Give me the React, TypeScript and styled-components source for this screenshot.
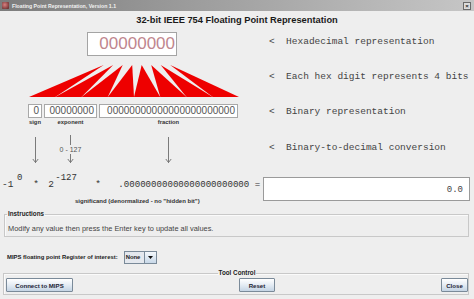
import styled, { createGlobalStyle } from "styled-components";

const GlobalStyle = createGlobalStyle`
  html, body {
    margin: 0;
    padding: 0;
    background: #eeeeee;
  }
  body {
    font-family: "Liberation Sans", Arial, sans-serif;
  }
`;

const Window = styled.div`
  width: 474px;
  height: 299px;
  overflow: hidden;
  background: #eeeeee;
  display: flex;
  flex-direction: column;
`;

const TitleBar = styled.div`
  height: 11px;
  flex: none;
  display: flex;
  align-items: center;
  gap: 3px;
  padding: 0 3px 0 2px;
  background: linear-gradient(to right, #7c7c7c, #9c9c9c 40%, #c6c6c6);
`;
const TitleIcon = styled.div`
  width: 7px;
  height: 7px;
  border-radius: 1px;
  background: radial-gradient(circle at 40% 40%, #d88080, #5a2222);
`;
const TitleText = styled.span`
  flex: 1;
  font-size: 5.2px;
  font-weight: bold;
  color: #f2f2f2;
`;
const CloseBox = styled.div`
  width: 6px;
  height: 6px;
  border: 1px solid #6a6a6a;
  background: #dcdcdc;
  font-size: 6px;
  line-height: 6px;
  text-align: center;
  font-weight: bold;
  color: #222;
`;

const Heading = styled.h1`
  margin: 2px 0 0;
  font-size: 9.3px;
  line-height: 14px;
  font-weight: bold;
  text-align: center;
  color: #1a1a1a;
`;

const Row = styled.div<{ $top: number; $height: number }>`
  display: flex;
  margin-top: ${(p) => p.$top}px;
  height: ${(p) => p.$height}px;
`;
const Left = styled.div`
  width: 269px;
  flex: none;
  display: flex;
`;
const Note = styled.div<{ $offset: number }>`
  margin-top: ${(p) => p.$offset}px;
  font-family: "Liberation Mono", "Courier New", monospace;
  font-size: 9.5px;
  line-height: 12px;
  color: #444;
  white-space: pre;
`;

const HexField = styled.div`
  margin-left: 87px;
  width: 87px;
  height: 22px;
  padding-right: 1px;
  border: 1px solid #a4a4a4;
  background: #fff;
  font-size: 17px;
  line-height: 22px;
  text-align: right;
  color: #c0868e;
`;

const BitColumn = styled.div<{ $width: number; $gap: number }>`
  width: ${(p) => p.$width}px;
  margin-left: ${(p) => p.$gap}px;
  display: flex;
  flex-direction: column;
  align-items: center;
`;
const BitBox = styled.div`
  align-self: stretch;
  height: 12px;
  padding-right: 2px;
  border: 1px solid #a8a8a8;
  background: #fff;
  font-size: 10px;
  line-height: 12px;
  text-align: right;
  color: #555;
`;
const BitLabel = styled.div`
  font-size: 5.8px;
  font-weight: bold;
  line-height: 8px;
  color: #333;
`;
const RangeLabel = styled.div`
  font-size: 7px;
  line-height: 9px;
  color: #555;
`;

const Expr = styled.div`
  display: flex;
  align-items: baseline;
  height: 16px;
  font-family: "Liberation Mono", "Courier New", monospace;
  font-size: 9.5px;
  line-height: 16px;
  color: #333;
  white-space: pre;
`;
const Piece = styled.span<{ $gap: number; $size?: number }>`
  margin-left: ${(p) => p.$gap}px;
  font-size: ${(p) => p.$size ?? 9.5}px;
`;
const Sup = styled.span<{ $gap: number }>`
  margin-left: ${(p) => p.$gap}px;
  font-size: 9px;
  transform: translateY(-7px);
`;
const FormulaLeft = styled.div`
  display: flex;
  flex-direction: column;
`;
const Caption = styled.div`
  margin: 4px 0 0 75px;
  font-size: 6px;
  font-weight: bold;
  line-height: 8px;
  color: #333;
`;
const ResultBox = styled.div`
  flex: 1;
  height: 22px;
  margin: 0 4px 0 3px;
  padding-right: 6px;
  border: 1px solid #9a9a9a;
  background: #fff;
  font-family: "Liberation Mono", "Courier New", monospace;
  font-size: 9px;
  line-height: 24px;
  text-align: right;
  color: #444;
`;

const Group = styled.fieldset<{ $top: number; $left: number }>`
  margin: ${(p) => p.$top}px 5px 0 ${(p) => p.$left}px;
  padding: 0 0 2px 2px;
  border: 1px solid #c8c8c8;
  box-shadow: inset 1px 1px 0 #fafafa;
  min-width: 0;
`;
const Legend = styled.legend<{ $center?: boolean }>`
  padding: 0 1px;
  margin: ${(p) => (p.$center ? "0 auto" : "0")};
  font-size: 6.3px;
  font-weight: bold;
  line-height: 8px;
  color: #222;
`;
const GroupText = styled.div`
  margin-top: 6px;
  padding-left: 1px;
  font-size: 7.4px;
  line-height: 10px;
  color: #444;
`;

const RegisterRow = styled.div`
  display: flex;
  align-items: center;
  height: 12px;
  margin: 14px 0 0 7px;
  gap: 6px;
`;
const RegisterLabel = styled.span`
  font-size: 5.9px;
  font-weight: bold;
  color: #222;
`;
const Combo = styled.div`
  display: flex;
  height: 11px;
  border: 1px solid #7a8a99;
`;
const ComboValue = styled.div`
  width: 18px;
  padding-left: 1px;
  background: #e4e8ee;
  font-size: 5.9px;
  font-weight: bold;
  line-height: 11px;
  color: #222;
`;
const ComboArrow = styled.div`
  width: 11px;
  border-left: 1px solid #7a8a99;
  background: linear-gradient(#f4f8fc, #c8d8e8);
  display: flex;
  align-items: center;
  justify-content: center;
`;

const ButtonRow = styled.div`
  display: flex;
  justify-content: space-between;
  margin-top: 1px;
`;
const Button = styled.button<{ $width: number }>`
  width: ${(p) => p.$width}px;
  height: 14px;
  padding: 0;
  border: 1px solid #7a8a99;
  border-radius: 1px;
  background: linear-gradient(#ffffff, #e4ecf4 50%, #c4d4e4);
  font-family: "Liberation Sans", Arial, sans-serif;
  font-size: 6.1px;
  font-weight: bold;
  color: #223;
`;

const ArrowCol = styled.div<{ $width: number; $gap: number; $pad: number }>`
  width: ${(p) => p.$width}px;
  margin-left: ${(p) => p.$gap}px;
  padding-top: ${(p) => p.$pad}px;
  display: flex;
  flex-direction: column;
  align-items: center;
`;

function DownArrow({ height, head = true }: { height: number; head?: boolean }) {
  return (
    <svg width="7" height={height} viewBox={`0 0 7 ${height}`}>
      <line x1="3.5" y1="0" x2="3.5" y2={height} stroke="#7a7a7a" strokeWidth="1" />
      {head && (
        <polyline
          points={`0.8,${height - 4} 3.5,${height - 0.5} 6.2,${height - 4}`}
          fill="none"
          stroke="#7a7a7a"
          strokeWidth="1"
        />
      )}
    </svg>
  );
}

function Fan() {
  const baseLeft = 29;
  const baseRight = 239;
  const step = (baseRight - baseLeft) / 8;
  const tris = Array.from({ length: 8 }, (_, i) => {
    const apex = 103.7 + i * 9.5;
    const b0 = baseLeft + i * step;
    const b1 = b0 + step;
    return `${apex},0 ${b1},32 ${b0},32`;
  });
  return (
    <svg width="269" height="32" viewBox="0 0 269 32">
      {tris.map((p, i) => (
        <polygon key={i} points={p} fill="#ee0000" />
      ))}
    </svg>
  );
}

export default function App() {
  return (
    <Window>
      <GlobalStyle />
      <TitleBar>
        <TitleIcon />
        <TitleText>Floating Point Representation, Version 1.1</TitleText>
        <CloseBox>×</CloseBox>
      </TitleBar>

      <Heading>32-bit IEEE 754 Floating Point Representation</Heading>

      <Row $top={5} $height={24}>
        <Left>
          <HexField>00000000</HexField>
        </Left>
        <Note $offset={4}>{"<  Hexadecimal representation"}</Note>
      </Row>

      <Row $top={9} $height={32}>
        <Left>
          <Fan />
        </Left>
        <Note $offset={6}>{"<  Each hex digit represents 4 bits"}</Note>
      </Row>

      <Row $top={7} $height={22}>
        <Left>
          <BitColumn $width={14} $gap={28}>
            <BitBox>0</BitBox>
            <BitLabel>sign</BitLabel>
          </BitColumn>
          <BitColumn $width={53} $gap={2}>
            <BitBox>00000000</BitBox>
            <BitLabel>exponent</BitLabel>
          </BitColumn>
          <BitColumn $width={139} $gap={2}>
            <BitBox>00000000000000000000000</BitBox>
            <BitLabel>fraction</BitLabel>
          </BitColumn>
        </Left>
        <Note $offset={2}>{"<  Binary representation"}</Note>
      </Row>

      <Row $top={8} $height={30}>
        <Left>
          <ArrowCol $width={14} $gap={28} $pad={3}>
            <DownArrow height={26} />
          </ArrowCol>
          <ArrowCol $width={53} $gap={2} $pad={1}>
            <DownArrow height={10} head={false} />
            <RangeLabel>0 - 127</RangeLabel>
            <DownArrow height={9} />
          </ArrowCol>
          <ArrowCol $width={139} $gap={2} $pad={3}>
            <DownArrow height={26} />
          </ArrowCol>
        </Left>
        <Note $offset={8}>{"<  Binary-to-decimal conversion"}</Note>
      </Row>

      <Row $top={13} $height={28}>
        <FormulaLeft>
          <Expr>
            <Piece $gap={2}>-1</Piece>
            <Sup $gap={3.5}>0</Sup>
            <Piece $gap={11}>*</Piece>
            <Piece $gap={9.3}>2</Piece>
            <Sup $gap={1.3}>-127</Sup>
            <Piece $gap={18.4}>*</Piece>
            <Piece $gap={17.3} $size={9.1}>
              .00000000000000000000000 =
            </Piece>
          </Expr>
          <Caption>significand (denormalized - no "hidden bit")</Caption>
        </FormulaLeft>
        <ResultBox>0.0</ResultBox>
      </Row>

      <Group $top={5} $left={4}>
        <Legend>Instructions</Legend>
        <GroupText>Modify any value then press the Enter key to update all values.</GroupText>
      </Group>

      <RegisterRow>
        <RegisterLabel>MIPS floating point Register of interest:</RegisterLabel>
        <Combo>
          <ComboValue>None</ComboValue>
          <ComboArrow>
            <svg width="5" height="3" viewBox="0 0 5 3">
              <polygon points="0,0 5,0 2.5,3" fill="#111" />
            </svg>
          </ComboArrow>
        </Combo>
      </RegisterRow>

      <Group $top={6} $left={3}>
        <Legend $center>Tool Control</Legend>
        <ButtonRow>
          <Button $width={67}>Connect to MIPS</Button>
          <Button $width={36}>Reset</Button>
          <Button $width={27}>Close</Button>
        </ButtonRow>
      </Group>
    </Window>
  );
}
